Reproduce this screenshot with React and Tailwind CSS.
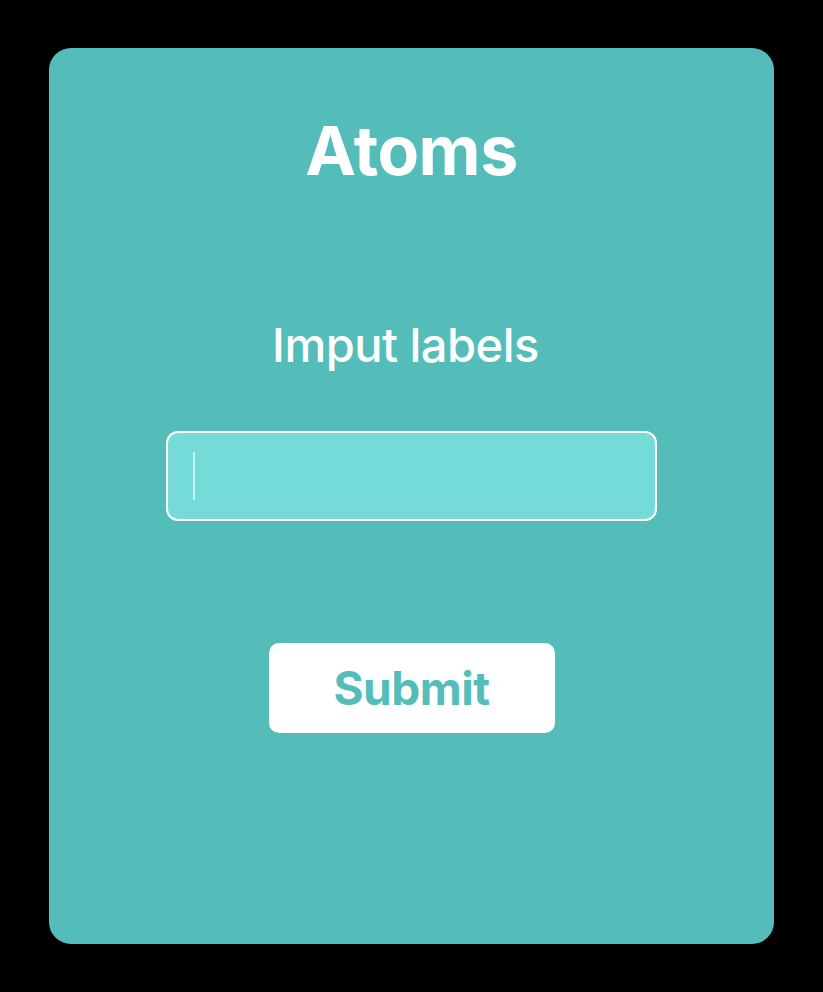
export default function App() {
  return (
    <div className="min-h-[992px] w-full bg-black pt-[48px] px-[49px]" style={{ fontFamily: 'Inter, "Noto Sans", sans-serif' }}>
      <div className="w-[725px] h-[896px] rounded-[22px] bg-[#55bdb9] flex flex-col items-center">
        {/* Title */}
        <h1 className="mt-[60px] text-[68px] leading-[84px] font-bold text-white tracking-[-0.5px]">Atoms</h1>

        {/* Label */}
        <label className="mt-[123px] mr-[12px] text-[47px] leading-[60px] font-medium text-white tracking-[-0.5px]">Imput labels</label>

        {/* Input */}
        <div className="mt-[56px] w-[491px] h-[90px] rounded-[12px] border-2 border-white bg-[#75dbd8] flex items-center pl-[25px]">
          <div className="w-[2px] h-[48px] bg-white/60" />
        </div>

        {/* Button */}
        <button className="mt-[122px] w-[286px] h-[90px] rounded-[10px] bg-white text-[#55bdb9] text-[46px] font-bold tracking-[-0.5px]">
          Submit
        </button>
      </div>
    </div>
  );
}
